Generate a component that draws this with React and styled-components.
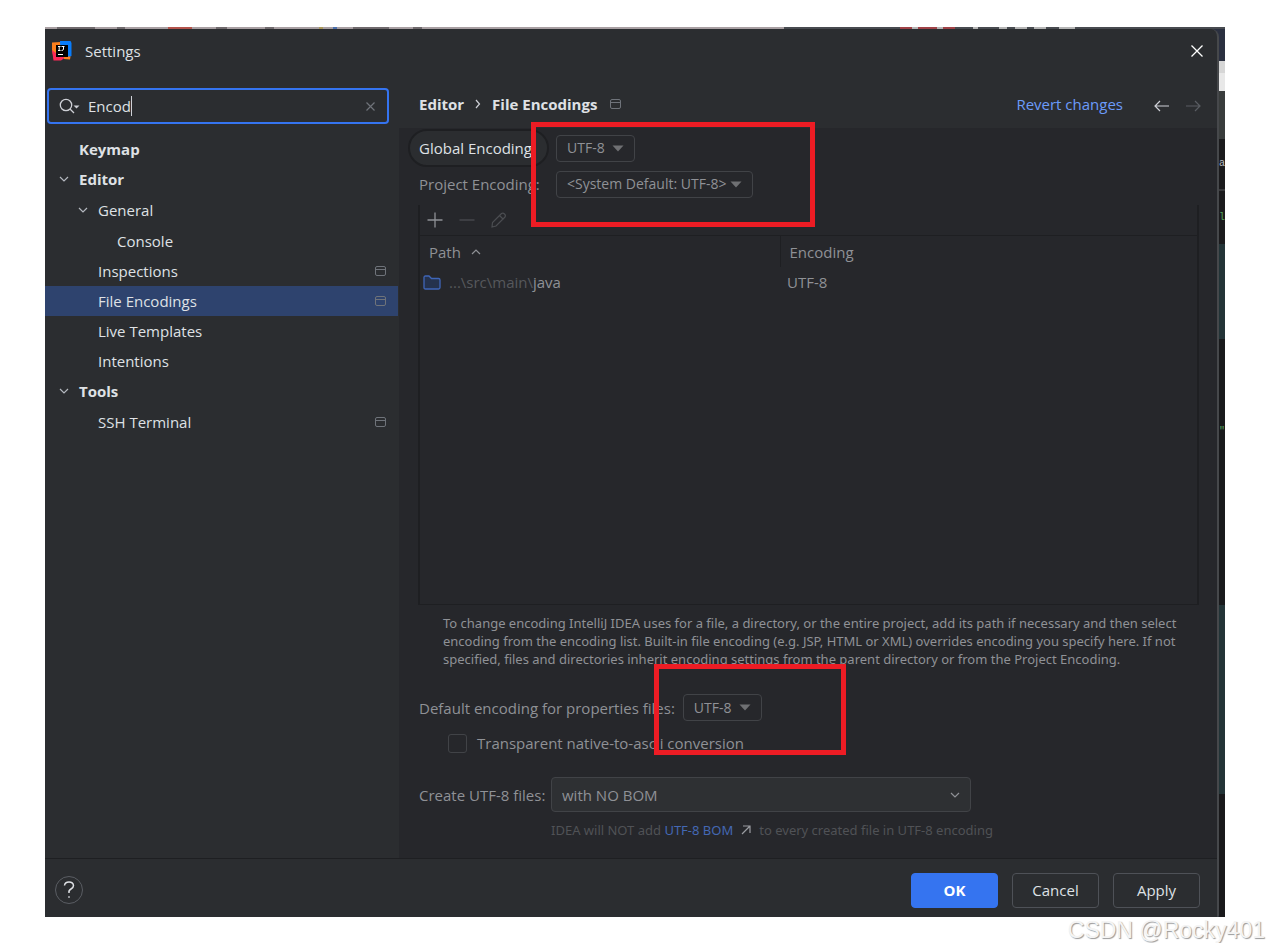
import React, { useState } from "react";
import styled, { createGlobalStyle } from "styled-components";

const tree = [
  { name: "Keymap" },
  {
    name: "Editor",
    children: [
      { name: "General", children: [{ name: "Console" }] },
      { name: "Inspections", project: true },
      { name: "File Encodings", project: true },
      { name: "Live Templates" },
      { name: "Intentions" },
    ],
  },
  { name: "Tools", children: [{ name: "SSH Terminal", project: true }] },
];

// slices of the editor that show next to the dialog
const backdrop = [
  { height: 32, color: "#2b3040" },
  { height: 12, color: "#d6d6d6" },
  { height: 18, color: "#e8e8e8" },
  { height: 48, color: "#393c3c" },
  { height: 50, color: "#1b1b1d", text: "a", ink: "#bcbec4" },
  { height: 2, color: "#38393b" },
  { height: 53, color: "#1b1b1d", text: "l", ink: "#57a65c" },
  { height: 95, color: "#233437" },
  { height: 186, color: "#191a1c", text: '"', ink: "#57a65c" },
  { height: 80, color: "#191a1c" },
  { height: 189, color: "#233437" },
  { height: 123, color: "#19191b" },
];

function ProjectIcon() {
  return (
    <svg width="11" height="11" viewBox="0 0 11 11" fill="none" stroke="#6f737a">
      <rect x="0.5" y="0.5" width="10" height="9" rx="1.5" />
      <path d="M1 3.5h9" />
    </svg>
  );
}

function Chevron({ up, color = "#b4b8bf" }) {
  return (
    <svg width="10" height="6" viewBox="0 0 10 6" fill="none" stroke={color} strokeWidth="1.2">
      <path d={up ? "M1 5l4-4 4 4" : "M1 1l4 4 4-4"} />
    </svg>
  );
}

function Logo() {
  return (
    <svg width="20" height="20" viewBox="0 0 20 20">
      <path d="M0 1.500L9 1l3 9-6 9-4-.5L0 9z" fill="#fc801d" />
      <path d="M8 0h10.500L19.500 2v13l-5 2-6-4z" fill="#087cfa" />
      <path d="M0 9l5 4 9 3-5 3.500H1.500z" fill="#fe2857" />
      <path d="M12 15.500h6.500l-.5 3-6-.5z" fill="#fc801d" />
      <path d="M4 4h12v12H4z" fill="#000" />
      <path d="M6 5.500h2.500M7.200 5.500v4M6 9.500h2.500M9.500 5.500h3M11.500 5.500v2.500q0 1.500-2 1.500M6 13.500h5" stroke="#fff" fill="none" />
    </svg>
  );
}

function TreeItem({ item, level, selected, onSelect }) {
  return (
    <li>
      <TreeRow $level={level} $selected={selected === item.name} onClick={() => onSelect(item.name)}>
        <Twisty>{item.children && <Chevron />}</Twisty>
        <TreeName>{item.name}</TreeName>
        {item.project && <ProjectIcon />}
      </TreeRow>
      {item.children && (
        <SubTree>
          {item.children.map((child) => (
            <TreeItem key={child.name} item={child} level={level + 1} selected={selected} onSelect={onSelect} />
          ))}
        </SubTree>
      )}
    </li>
  );
}

function EncodingSelect({ id, width, value }) {
  return (
    <SelectBox $width={width}>
      <SmallSelect id={id} defaultValue={value}>
        <option>{value}</option>
      </SmallSelect>
      <SelectArrow>
        <svg width="12" height="7" viewBox="0 0 12 7">
          <path d="M0.500 0.500h11L6 6.500z" fill="#6f7073" />
        </svg>
      </SelectArrow>
    </SelectBox>
  );
}

function App() {
  const [query, setQuery] = useState("Encod");
  const [selected, setSelected] = useState("File Encodings");

  return (
    <Page>
      <GlobalStyle />
      <Desktop>
        <TopEdge />
        <Dialog>
          <TitleBar>
            <Logo />
            <Title>Settings</Title>
            <IconButton aria-label="Close">
              <svg width="12" height="12" viewBox="0 0 12 12" stroke="#fff" strokeWidth="1.300">
                <path d="M0.500 0.500l11 11M11.500 0.500l-11 11" />
              </svg>
            </IconButton>
          </TitleBar>

          <Columns>
            <Sidebar>
              <SearchBox>
                <svg width="21" height="16" viewBox="0 0 21 16" fill="none" stroke="#ced0d6" strokeWidth="1.300">
                  <circle cx="7" cy="7" r="5.700" />
                  <path d="M11 11l4 4" />
                  <path d="M14.500 7.500h6l-3 3z" fill="#ced0d6" stroke="none" />
                </svg>
                <SearchInput aria-label="Search settings" value={query} onChange={(e) => setQuery(e.target.value)} />
                <Caret />
                <ClearButton aria-label="Clear" onClick={() => setQuery("")}>
                  <svg width="9" height="9" viewBox="0 0 9 9" stroke="#6f737a" strokeWidth="1.200">
                    <path d="M0.500 0.500l8 8M8.500 0.500l-8 8" />
                  </svg>
                </ClearButton>
              </SearchBox>
              <Tree>
                {tree.map((item) => (
                  <TreeItem key={item.name} item={item} level={0} selected={selected} onSelect={setSelected} />
                ))}
              </Tree>
            </Sidebar>

            <Main>
              <Header>
                <Crumb>Editor</Crumb>
                <svg width="6" height="10" viewBox="0 0 6 10" fill="none" stroke="#ced0d6" strokeWidth="1.200">
                  <path d="M1 1l3.500 4L1 9" />
                </svg>
                <Crumb>File Encodings</Crumb>
                <ProjectMark>
                  <ProjectIcon />
                </ProjectMark>
                <Revert href="#revert">Revert changes</Revert>
                <NavButtons>
                  <IconButton aria-label="Back">
                    <svg width="15" height="12" viewBox="0 0 15 12" fill="none" stroke="#ced0d6" strokeWidth="1.200">
                      <path d="M15 6H1M6 1L1 6l5 5" />
                    </svg>
                  </IconButton>
                  <IconButton aria-label="Forward">
                    <svg width="15" height="12" viewBox="0 0 15 12" fill="none" stroke="#5a5d63" strokeWidth="1.200">
                      <path d="M0 6h14M9 1l5 5-5 5" />
                    </svg>
                  </IconButton>
                </NavButtons>
              </Header>

              <Content>
                <Scopes>
                  <Spotlight htmlFor="global">Global Encoding:</Spotlight>
                  <EncodingSelect id="global" width={79} value="UTF-8" />
                  <Label htmlFor="project">Project Encoding:</Label>
                  <EncodingSelect id="project" width={197} value="<System Default: UTF-8>" />
                </Scopes>

                <Panel>
                  <Toolbar>
                    <IconButton aria-label="Add">
                      <svg width="16" height="16" viewBox="0 0 16 16" stroke="#8f9196" strokeWidth="1.300">
                        <path d="M8 0.500v15M0.500 8h15" />
                      </svg>
                    </IconButton>
                    <IconButton aria-label="Remove">
                      <svg width="16" height="16" viewBox="0 0 16 16" stroke="#4b4d51" strokeWidth="1.300">
                        <path d="M0.500 8h15" />
                      </svg>
                    </IconButton>
                    <IconButton aria-label="Edit">
                      <svg width="16" height="16" viewBox="0 0 16 16" fill="none" stroke="#4b4d51" strokeWidth="1.200">
                        <path d="M1 15l.5-4.500 9-9q1.500-1 3 .5t.5 3l-9 9zM8.500 3.500l4 4" />
                      </svg>
                    </IconButton>
                  </Toolbar>
                  <Table>
                    <thead>
                      <tr>
                        <PathHead>
                          <HeadName>
                            Path <Chevron up color="#8f9196" />
                          </HeadName>
                        </PathHead>
                        <EncodingHead>Encoding</EncodingHead>
                      </tr>
                    </thead>
                    <tbody>
                      <tr>
                        <PathCell>
                          <FilePath>
                            <svg width="18" height="15" viewBox="0 0 18 15" fill="#25324d" stroke="#3f66b8" strokeWidth="1.300">
                              <path d="M1 2.500Q1 1 2.500 1H6l2.500 2.500h7Q17 3.500 17 5v7.500q0 1.500-1.500 1.500h-13Q1 14 1 12.500z" />
                            </svg>
                            <span>
                              <Dim>...\src\main\</Dim>java
                            </span>
                          </FilePath>
                        </PathCell>
                        <Cell>UTF-8</Cell>
                      </tr>
                    </tbody>
                  </Table>
                </Panel>

                <Note>
                  To change encoding IntelliJ IDEA uses for a file, a directory, or the entire project, add its path if
                  necessary and then select encoding from the encoding list. Built-in file encoding (e.g. JSP, HTML or
                  XML) overrides encoding you specify here. If not specified, files and directories inherit encoding
                  settings from the parent directory or from the Project Encoding.
                </Note>

                <Field>
                  <Label htmlFor="properties">Default encoding for properties files:</Label>
                  <EncodingSelect id="properties" width={79} value="UTF-8" />
                </Field>
                <CheckLabel>
                  <Checkbox type="checkbox" />
                  Transparent native-to-ascii conversion
                </CheckLabel>

                <BomGrid>
                  <Label htmlFor="bom">Create UTF-8 files:</Label>
                  <SelectBox $width={420}>
                    <WideSelect id="bom" defaultValue="with NO BOM">
                      <option>with NO BOM</option>
                    </WideSelect>
                    <SelectArrow>
                      <Chevron color="#8f9196" />
                    </SelectArrow>
                  </SelectBox>
                  <Hint>
                    <span>
                      IDEA will NOT add <a href="#bom">UTF-8 BOM</a>
                    </span>
                    <svg width="10" height="10" viewBox="0 0 10 10" fill="none" stroke="#9a9ca1" strokeWidth="1.200">
                      <path d="M1 9l8-8M2 1h7v7" />
                    </svg>
                    <span>to every created file in UTF-8 encoding</span>
                  </Hint>
                </BomGrid>
              </Content>
            </Main>
          </Columns>

          <Footer>
            <HelpButton aria-label="Help">
              <svg width="12" height="18" viewBox="0 0 12 18" fill="none" stroke="#dfe1e5" strokeWidth="1.500">
                <path d="M1.500 4.500Q2 1 6 1t4.500 3.500Q10.500 6.500 8 8T6 11.500v.5" />
                <path d="M6 15.200v1.600" />
              </svg>
            </HelpButton>
            <Button $primary>OK</Button>
            <Button>Cancel</Button>
            <Button>Apply</Button>
          </Footer>
        </Dialog>
        <Backdrop>
          {backdrop.map((slice, i) => (
            <Slice key={i} $height={slice.height} $color={slice.color} $ink={slice.ink}>
              {slice.text}
            </Slice>
          ))}
        </Backdrop>
        <Marker $left={486} $top={95} $width={284} $height={105} />
        <Marker $left={609} $top={637} $width={192} $height={91} />
      </Desktop>
      <Watermark>CSDN @Rocky401</Watermark>
    </Page>
  );
}

export default App;

const GlobalStyle = createGlobalStyle`
  * {
    box-sizing: border-box;
  }
  body {
    margin: 0;
    background: #fff;
    color: #dfe1e5;
    font: 15px/20px "Open Sans", "Noto Sans", sans-serif;
  }
  button, input, select {
    font: inherit;
    color: inherit;
    margin: 0;
  }
  svg {
    display: block;
    flex: none;
  }
  ul {
    list-style: none;
    margin: 0;
    padding: 0;
  }
`;

const Page = styled.div`
  padding: 27px 0 0 45px;
`;

const Desktop = styled.div`
  position: relative;
  display: grid;
  grid-template-columns: 1fr 6px;
  margin-right: 44px;
  background: #2b3040;
`;

const TopEdge = styled.div`
  grid-column: 1 / -1;
  height: 2px;
  background: linear-gradient(
    to right,
    #a89fa2 0 12px,
    #6f696c 12px 50px,
    #a89fa2 50px 72px,
    #6f696c 72px 80px,
    #a89fa2 80px 123px,
    #b4534b 123px 147px,
    #a89fa2 147px 171px,
    #6f696c 171px 182px,
    #a89fa2 182px 220px,
    #6f696c 220px 229px,
    #a89fa2 229px 274px,
    #a9975a 274px 278px,
    #a89fa2 278px 288px,
    #4b70ad 288px 292px,
    #a89fa2 292px 308px,
    #6f696c 308px 344px,
    #a89fa2 344px 368px,
    #6f696c 368px 377px,
    #a89fa2 377px 739px,
    #484b50 739px 855px,
    #a04247 855px 867px,
    #b5b5b5 867px 873px,
    #a04247 873px 892px,
    #b5b5b5 892px 898px,
    #a04247 898px 910px,
    #484b50 910px 928px,
    #b5b5b5 928px 933px,
    #484b50 933px 954px,
    #b5b5b5 954px 962px,
    #484b50 962px 970px,
    #b5b5b5 970px 982px,
    #484b50 982px 989px,
    #b5b5b5 989px 1001px,
    #484b50 1001px 1014px,
    #b5b5b5 1014px 1030px,
    #484b50 1030px
  );
`;

const Dialog = styled.div`
  min-width: 0;
  background: #2b2d30;
  border-right: 2px solid #46484b;
  border-radius: 0 8px 2px 0;
`;

const Backdrop = styled.div`
  height: 0;
  min-height: 100%;
  overflow: hidden;
  font: 10px/12px "Liberation Mono", monospace;
`;

const Slice = styled.div`
  display: flex;
  align-items: center;
  height: ${(props) => props.$height}px;
  background: ${(props) => props.$color};
  color: ${(props) => props.$ink};
`;

const TitleBar = styled.div`
  display: flex;
  align-items: center;
  height: 43px;
  padding: 0 14px 0 7px;
`;

const Title = styled.span`
  flex: 1;
  padding-left: 13px;
`;

const IconButton = styled.button`
  display: flex;
  padding: 0;
  border: 0;
  background: none;
`;

const Columns = styled.div`
  display: flex;
`;

const Sidebar = styled.div`
  width: 354px;
  flex: none;
  padding: 16px 1px 0 0;
`;

const SearchBox = styled.div`
  display: flex;
  align-items: center;
  height: 36px;
  margin: 0 9px 10px 2px;
  padding: 0 12px 0 10px;
  border: 2px solid #3574f0;
  border-radius: 4px;
`;

const SearchInput = styled.input`
  field-sizing: content;
  margin-left: 8px;
  padding: 0;
  border: 0;
  outline: 0;
  background: none;
`;

const Caret = styled.span`
  width: 1px;
  height: 20px;
  background: #ced0d6;
`;

const ClearButton = styled(IconButton)`
  margin-left: auto;
`;

const Tree = styled.ul``;

const SubTree = styled.ul`
  padding-top: 1px;
`;

const TreeRow = styled.div`
  display: flex;
  align-items: center;
  height: 30px;
  padding: 0 12px 0 ${(props) => 14 + props.$level * 19}px;
  background: ${(props) => (props.$selected ? "#2e436e" : "none")};
  font-weight: ${(props) => (props.$level === 0 ? 700 : 400)};
  cursor: default;
`;

const Twisty = styled.span`
  width: 20px;
`;

const TreeName = styled.span`
  flex: 1;
`;

const Main = styled.div`
  flex: 1;
  min-width: 0;
  display: flex;
  flex-direction: column;
`;

const Header = styled.div`
  display: flex;
  align-items: center;
  gap: 11px;
  height: 56px;
  padding: 8px 16px 0 20px;
`;

const Crumb = styled.span`
  font-weight: 700;
`;

const ProjectMark = styled.span`
  margin-left: 2px;
`;

const Revert = styled.a`
  margin-left: auto;
  color: #6b9bfa;
  text-decoration: none;
`;

const NavButtons = styled.div`
  display: flex;
  gap: 17px;
  padding: 4px 0 0 20px;
`;

const Content = styled.div`
  flex: 1;
  padding: 1px 19px 18px 20px;
  background: #26272b;
  color: #8f9196;
`;

const Scopes = styled.div`
  display: grid;
  grid-template-columns: 137px 1fr;
  align-items: center;
  grid-template-rows: 38px 34px;
`;

const Label = styled.label`
  white-space: nowrap;
`;

const Spotlight = styled(Label)`
  display: flex;
  align-items: center;
  width: 141px;
  height: 38px;
  margin-left: -11px;
  padding-left: 9px;
  border: 2px solid #1e1f22;
  border-radius: 19px;
  background: #2b2d30;
  color: #dfe1e5;
  overflow: hidden;
`;

const SelectBox = styled.div`
  position: relative;
  width: ${(props) => props.$width}px;
`;

const SmallSelect = styled.select`
  appearance: none;
  display: block;
  width: 100%;
  height: 27px;
  padding: 0 0 0 10px;
  border: 1px solid #414347;
  border-radius: 4px;
  background: #26272b;
  font-size: 14px;
`;

const WideSelect = styled(SmallSelect)`
  height: 35px;
  background: #2e3033;
  font-size: 15px;
`;

const SelectArrow = styled.span`
  position: absolute;
  top: 0;
  right: 11px;
  bottom: 0;
  display: flex;
  align-items: center;
  pointer-events: none;
`;

const Panel = styled.div`
  height: 400px;
  margin: 4px -1px 0;
  border: solid #1e1f22;
  border-width: 0 2px 1px;
`;

const Toolbar = styled.div`
  display: flex;
  align-items: center;
  gap: 16px;
  height: 31px;
  padding-left: 7px;
  border-bottom: 1px solid #1e1f22;
`;

const Table = styled.table`
  width: 100%;
  border-collapse: collapse;
  table-layout: fixed;
`;

const Cell = styled.td`
  height: 30px;
  padding: 0 0 0 7px;
`;

const PathCell = styled(Cell)`
  padding-left: 3px;
`;

const EncodingHead = styled.th`
  height: 31px;
  padding: 0 0 0 9px;
  border-left: 1px solid #1e1f22;
  font-weight: 400;
  text-align: left;
`;

const PathHead = styled(EncodingHead)`
  width: 360px;
  border-left: 0;
`;

const HeadName = styled.span`
  display: flex;
  align-items: center;
  gap: 10px;
`;

const FilePath = styled.span`
  display: flex;
  align-items: center;
  gap: 8px;
`;

const Dim = styled.span`
  color: #56585c;
`;

const Note = styled.p`
  margin: 9px 0 0;
  padding-left: 24px;
  font-family: "Noto Sans", sans-serif;
  font-size: 13px;
  line-height: 18px;
`;

const Field = styled.div`
  display: flex;
  align-items: center;
  gap: 8px;
  margin-top: 26px;
`;

const CheckLabel = styled.label`
  display: flex;
  align-items: center;
  gap: 10px;
  margin: 12px 0 24px 29px;
`;

const Checkbox = styled.input`
  appearance: none;
  width: 19px;
  height: 19px;
  border: 1px solid #414347;
  border-radius: 3px;
`;

const BomGrid = styled.div`
  display: grid;
  grid-template-columns: 132px 1fr;
  row-gap: 8px;
  align-items: center;
`;

const Hint = styled.div`
  grid-column: 2;
  display: flex;
  align-items: center;
  gap: 8px;
  color: #505256;
  font-family: "Noto Sans", sans-serif;
  font-size: 13px;

  a {
    color: #4468b4;
    text-decoration: none;
  }
`;

const Footer = styled.div`
  display: flex;
  align-items: center;
  gap: 14px;
  height: 59px;
  padding: 4px 17px 0 10px;
  border-top: 1px solid #1e1f22;
`;

const HelpButton = styled.button`
  display: grid;
  place-items: center;
  width: 28px;
  height: 28px;
  margin-right: auto;
  padding: 0;
  border: 1px solid #5a5d63;
  border-radius: 50%;
  background: none;
`;

const Button = styled.button`
  width: 87px;
  height: 35px;
  border: 1px solid ${(props) => (props.$primary ? "#3574f0" : "#4e5157")};
  border-radius: 4px;
  background: ${(props) => (props.$primary ? "#3574f0" : "none")};
  color: ${(props) => (props.$primary ? "#fff" : "#dfe1e5")};
  font-weight: ${(props) => (props.$primary ? 700 : 400)};
`;

const Marker = styled.div`
  position: absolute;
  left: ${(props) => props.$left}px;
  top: ${(props) => props.$top}px;
  width: ${(props) => props.$width}px;
  height: ${(props) => props.$height}px;
  border: 5px solid #ed1c24;
  pointer-events: none;
`;

const Watermark = styled.div`
  padding-right: 4px;
  color: #f4f4f4;
  font: 23px/26px "Liberation Sans", sans-serif;
  text-align: right;
  text-shadow: 1px 1px 1px #999;
`;
